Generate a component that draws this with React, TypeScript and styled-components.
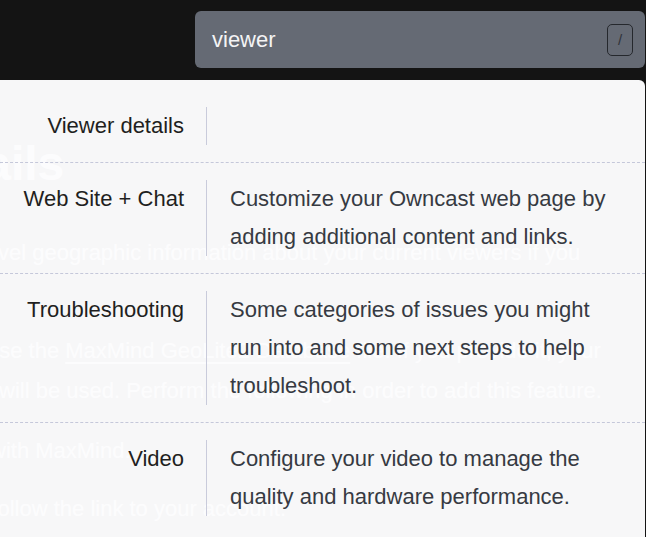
import React from 'react';
import styled, { createGlobalStyle } from 'styled-components';

const GlobalStyle = createGlobalStyle`
  html, body {
    margin: 0;
    padding: 0;
    background: #141414;
    overflow: hidden;
  }
  body {
    font-family: "Liberation Sans", Arial, sans-serif;
  }
`;

const Page = styled.div`
  width: 646px;
  height: 537px;
  overflow: hidden;
  background: #141414;
`;

const TopBar = styled.header`
  display: flex;
  justify-content: flex-end;
  align-items: flex-start;
  height: 80px;
  padding: 11px 1px 0 195px;
  box-sizing: border-box;
`;

const Search = styled.div`
  flex: 1;
  height: 57px;
  display: flex;
  align-items: center;
  justify-content: space-between;
  padding: 0 12px 0 17px;
  background: #656a74;
  border-radius: 6px;
`;

const Query = styled.span`
  font-size: 22px;
  color: #f4f4f5;
`;

const Kbd = styled.kbd`
  width: 26px;
  height: 32px;
  box-sizing: border-box;
  display: grid;
  place-items: center;
  border: 1px solid #25282d;
  border-radius: 5px;
  font-family: "Liberation Sans", Arial, sans-serif;
  font-size: 15px;
  color: #30333a;
`;

const Main = styled.main`
  position: relative;
  height: 457px;
  overflow: hidden;
`;

// page content that shows faintly through the results panel
const Content = styled.section`
  color: #ffffff;
`;

const Heading = styled.h2`
  margin: 60px 0 0;
  font-size: 48px;
  line-height: 48px;
  font-weight: 700;
  white-space: nowrap;
  text-indent: -255px;
`;

const Line = styled.p<{ $gap: number; $cut: number }>`
  margin: ${p => p.$gap}px 0 0;
  font-size: 22px;
  line-height: 40px;
  white-space: nowrap;
  text-indent: -${p => p.$cut}px;
`;

const Link = styled.a`
  color: inherit;
  text-decoration: underline;
  text-underline-offset: 4px;
`;

const Results = styled.div`
  position: absolute;
  top: 0;
  left: 0;
  bottom: 0;
  width: 645px;
  padding-top: 10px;
  box-sizing: border-box;
  background: rgba(252, 252, 253, 0.982);
  border-top-right-radius: 6px;
`;

const Row = styled.div`
  display: grid;
  grid-template-columns: 206px 1fr;
  padding: 17px 0;
  border-bottom: 1px dashed #c5c8da;
  &:last-child {
    border-bottom: none;
  }
`;

const Label = styled.div`
  padding-right: 22px;
  text-align: right;
  font-size: 22px;
  line-height: 38px;
  color: #1f1f21;
`;

const Description = styled.div`
  min-height: 38px;
  padding: 0 30px 0 23px;
  border-left: 1px solid #c9cbdb;
  font-size: 22px;
  line-height: 38px;
  color: #363a42;
`;

const results = [
  { label: 'Viewer details', description: '' },
  {
    label: 'Web Site + Chat',
    description: 'Customize your Owncast web page by adding additional content and links.',
  },
  {
    label: 'Troubleshooting',
    description:
      'Some categories of issues you might run into and some next steps to help troubleshoot.',
  },
  {
    label: 'Video',
    description: 'Configure your video to manage the quality and hardware performance.',
  },
];

const App = () => {
  return (
    <Page>
      <GlobalStyle />
      <TopBar>
        <Search>
          <Query>viewer</Query>
          <Kbd>/</Kbd>
        </Search>
      </TopBar>
      <Main>
        <Content>
          <Heading>Viewer details</Heading>
          <Line $gap={45} $cut={19}>
            level geographic information about your current viewers if you
          </Line>
          <Line $gap={58} $cut={13}>
            use the <Link href="#">MaxMind GeoLite2 Database</Link> file. If you provide it, your
          </Line>
          <Line $gap={0} $cut={1}>
            will be used. Perform the following in order to add this feature.
          </Line>
          <Line $gap={20} $cut={10}>
            with MaxMind.
          </Line>
          <Line $gap={18} $cut={16}>
            Follow the link to your account.
          </Line>
        </Content>
        <Results>
          {results.map(item => (
            <Row key={item.label}>
              <Label>{item.label}</Label>
              <Description>{item.description}</Description>
            </Row>
          ))}
        </Results>
      </Main>
    </Page>
  );
};

export default App;
